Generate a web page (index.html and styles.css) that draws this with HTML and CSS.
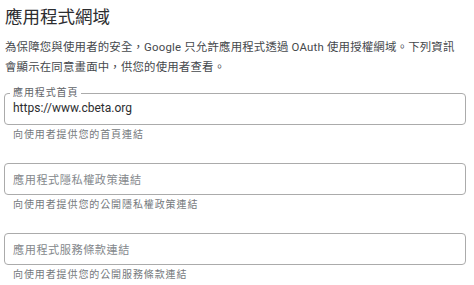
FILE: index.html
```html
<!DOCTYPE html>
<html lang="zh-Hant">
<head>
<meta charset="utf-8">
<link rel="stylesheet" href="styles.css">
</head>
<body>
<main class="page">
  <h1 class="title">應用程式網域</h1>
  <p class="intro">為保障您與使用者的安全，Google 只允許應用程式透過 OAuth 使用授權網域。下列資訊會顯示在同意畫面中，供您的使用者查看。</p>

  <div class="field">
    <div class="box filled">
      <span class="label">應用程式首頁</span>
      <span class="value">https://www.cbeta.org</span>
    </div>
    <div class="helper">向使用者提供您的首頁連結</div>
  </div>

  <div class="field">
    <div class="box">
      <span class="placeholder">應用程式隱私權政策連結</span>
    </div>
    <div class="helper">向使用者提供您的公開隱私權政策連結</div>
  </div>

  <div class="field">
    <div class="box">
      <span class="placeholder">應用程式服務條款連結</span>
    </div>
    <div class="helper">向使用者提供您的公開服務條款連結</div>
  </div>
</main>
</body>
</html>
```

FILE: styles.css
```css
html, body {
  margin: 0;
  padding: 0;
  background: #ffffff;
}

.page {
  font-family: Roboto, "Noto Sans CJK TC", sans-serif;
  padding: 5px 8px 0 4px;
  color: #45484c;
}

.title {
  margin: 0 0 0 1px;
  font-size: 17.5px;
  font-weight: 400;
  line-height: 24px;
  color: #2c2d30;
}

.intro {
  margin: 8px 0 0 1px;
  font-size: 11.4px;
  line-height: 20px;
  letter-spacing: 0.2px;
  color: #45484c;
}

.field {
  margin-top: 16px;
}

.field + .field {
  margin-top: 18px;
}

.box {
  position: relative;
  box-sizing: border-box;
  height: 32px;
  border: 1px solid #ababab;
  border-radius: 4px;
  display: flex;
  align-items: center;
  padding: 0 8px;
}

.box.filled {
  align-items: flex-end;
  padding-bottom: 8px;
}

.label {
  position: absolute;
  left: 5px;
  top: -7px;
  padding: 0 3px;
  background: #ffffff;
  font-size: 10px;
  line-height: 12px;
  letter-spacing: 0.9px;
  color: #5f6368;
}

.value {
  font-size: 12px;
  line-height: 15px;
  color: #2c2d30;
}

.placeholder {
  font-size: 11.2px;
  letter-spacing: 0.5px;
  color: #84888c;
}

.helper {
  margin-left: 9px;
  font-size: 10px;
  line-height: 20px;
  letter-spacing: 0.9px;
  color: #75797d;
}
```
